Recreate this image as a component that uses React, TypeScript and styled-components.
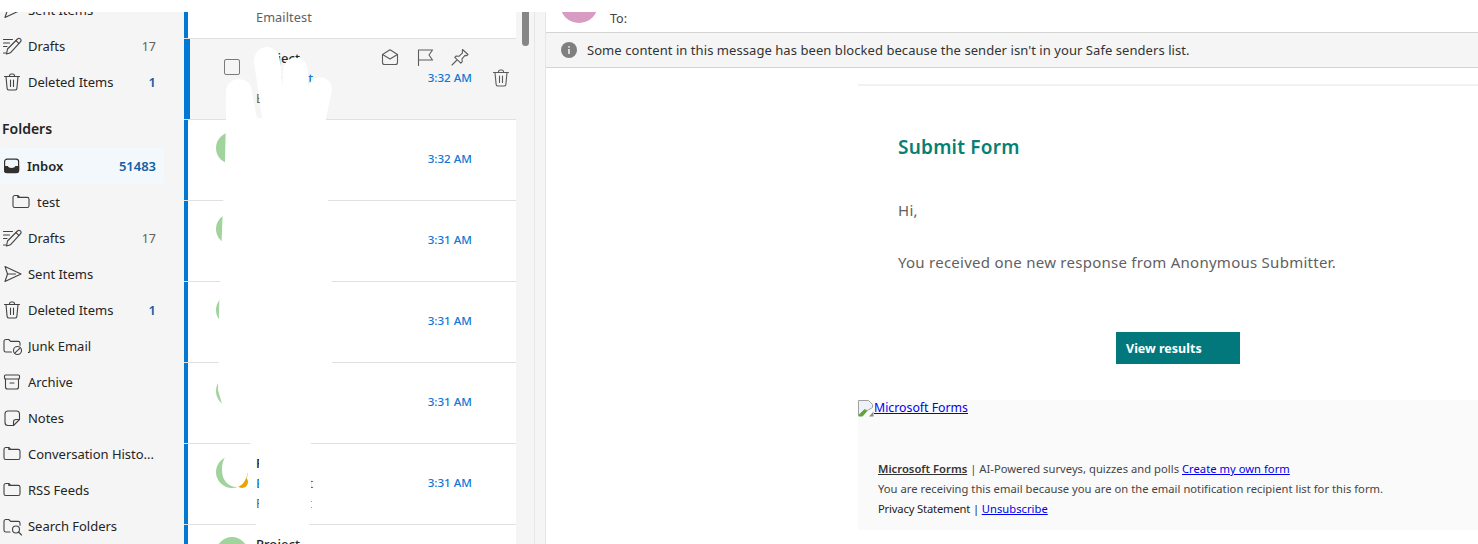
import React from "react";
import styled, { createGlobalStyle } from "styled-components";

const GlobalStyle = createGlobalStyle`
  html, body {
    margin: 0;
    padding: 0;
    background: #ffffff;
  }
  * {
    box-sizing: border-box;
  }
`;

const Page = styled.div`
  position: relative;
  width: 1478px;
  height: 544px;
  overflow: hidden;
  background: #ffffff;
  font-family: "Noto Sans", "Open Sans", sans-serif;
  color: #242424;
`;

const TopStrip = styled.div`
  height: 12px;
  background: #ffffff;
`;

const Workspace = styled.div`
  display: flex;
  height: 532px;
  overflow: hidden;
`;

/* folder pane */
const Sidebar = styled.nav`
  flex: 0 0 184px;
  background: #f5f5f5;
  overflow: hidden;
  padding-right: 20px;
  color: #424242;
`;

const FolderList = styled.div`
  margin-top: -20px;
`;

const FolderRow = styled.div<{ $active?: boolean; $indent?: number }>`
  display: flex;
  align-items: center;
  height: 36px;
  padding-left: ${(p) => 2 + (p.$indent || 0)}px;
  padding-right: 8px;
  border-radius: 4px;
  background: ${(p) => (p.$active ? "#f3f8fd" : "transparent")};
  font-size: 13px;
  letter-spacing: -0.03px;
  font-weight: ${(p) => (p.$active ? 600 : 400)};
`;

const FolderIcon = styled.span<{ $active?: boolean }>`
  flex: 0 0 ${(p) => (p.$active ? 25 : 26)}px;
  display: flex;
  align-items: center;
`;

const FolderName = styled.span`
  flex: 1;
  color: #242424;
  white-space: nowrap;
  overflow: hidden;
  text-overflow: ellipsis;
`;

const FolderCount = styled.span<{ $unread?: boolean }>`
  margin-left: 4px;
  font-size: ${(p) => (p.$unread ? 13 : 12.5)}px;
  color: ${(p) => (p.$unread ? "#115ea3" : "#616161")};
  font-weight: ${(p) => (p.$unread ? 600 : 400)};
`;

const SectionTitle = styled.div`
  display: flex;
  align-items: center;
  height: 36px;
  margin: 10px 0 2px;
  padding-left: 2px;
  font-size: 14px;
  font-weight: 600;
  color: #242424;
`;

/* message list */
const MailList = styled.section`
  flex: 0 0 332px;
  overflow: hidden;
  background: #ffffff;
`;

const MailRows = styled.div`
  margin-top: -54px;
`;

const MailRow = styled.div<{ $hover?: boolean }>`
  display: flex;
  height: 81px;
  padding: 9px 0 0 32px;
  border-bottom: 1px solid #e0e0e0;
  background: ${(p) => (p.$hover ? "#f5f5f5" : "#ffffff")};
  box-shadow: inset ${(p) => (p.$hover ? 6 : 4)}px 0 0 #0078d4;
`;

const LeadSlot = styled.div`
  position: relative;
  flex: 0 0 32px;
  height: 32px;
  margin: 3px 8px 0 0;
  display: flex;
  align-items: center;
  justify-content: center;
`;

const Avatar = styled.div`
  width: 32px;
  height: 32px;
  border-radius: 50%;
  background: #a1d39d;
`;

const PresenceDot = styled.span`
  position: absolute;
  right: 0;
  bottom: 0;
  width: 12px;
  height: 12px;
  border-radius: 50%;
  background: #eaa300;
`;

const CheckBox = styled.span`
  width: 16px;
  height: 16px;
  border: 1px solid #7a7a7a;
  border-radius: 2px;
`;

const MailText = styled.div`
  flex: 1;
  min-width: 0;
`;

const MailLine = styled.div<{ $kind: "from" | "subject" | "preview" }>`
  height: 20px;
  line-height: 20px;
  font-size: ${(p) => (p.$kind === "from" ? 13 : 12.7)}px;
  letter-spacing: 0.1px;
  white-space: nowrap;
  font-weight: ${(p) => (p.$kind === "preview" ? 400 : 500)};
  color: ${(p) =>
    p.$kind === "from" ? "#242424" : p.$kind === "subject" ? "#0f78d4" : "#616161"};
`;

const MailSide = styled.div`
  display: flex;
  flex-direction: column;
  align-items: flex-end;
  margin-right: 44px;
`;

const HoverActions = styled.div`
  display: flex;
  align-items: center;
  gap: 15px;
  height: 20px;
  margin-top: -1px;
  margin-bottom: 1px;
  margin-right: 2px;
  color: #5c5c5c;
`;

const MailTime = styled.div<{ $offset?: boolean }>`
  height: 20px;
  line-height: 20px;
  margin-top: ${(p) => (p.$offset ? 20 : 0)}px;
  font-size: 11.6px;
  font-weight: 500;
  color: #0f78d4;
  white-space: nowrap;
`;

const TrashAction = styled.div`
  position: absolute;
  top: 20px;
  right: 5px;
  display: flex;
  color: #5c5c5c;
`;

const HoverWrap = styled.div`
  position: relative;
`;

/* scrollbar and pane gap */
const ScrollTrack = styled.div`
  flex: 0 0 18px;
  background: #f5f5f5;
  padding-left: 6px;
`;

const ScrollThumb = styled.div`
  width: 7px;
  height: 34px;
  background: #868686;
  border-radius: 0 0 4px 4px;
`;

const PaneGap = styled.div`
  flex: 0 0 12px;
  background: #f5f5f5;
  border-left: 1px solid #e6e6e6;
  border-right: 1px solid #e6e6e6;
`;

/* reading pane */
const Reading = styled.main`
  flex: 1;
  min-width: 0;
  background: #ffffff;
  overflow: hidden;
`;

const HeaderStub = styled.div`
  display: flex;
  height: 20px;
  padding-left: 14px;
`;

const SenderAvatar = styled.div`
  width: 38px;
  height: 38px;
  margin-top: -27px;
  border-radius: 50%;
  background: #d89cc4;
`;

const ToLabel = styled.div`
  margin-left: 12px;
  font-size: 12.5px;
  line-height: 14px;
  color: #424242;
`;

const BlockedBar = styled.div`
  display: flex;
  align-items: center;
  gap: 10px;
  height: 36px;
  padding-left: 15px;
  background: #f5f5f5;
  border-top: 1px solid #d4d4d4;
  border-bottom: 1px solid #d4d4d4;
  font-size: 13px;
  letter-spacing: 0.06px;
  color: #333333;
`;

const InfoDot = styled.svg`
  flex: 0 0 16px;
`;

const EmailBody = styled.div`
  margin: 16px 0 0 312px;
  border-top: 2px solid #f2f2f2;
`;

const FormTitle = styled.h1`
  margin: 46px 0 0 40px;
  height: 30px;
  line-height: 30px;
  font-size: 19px;
  font-weight: 600;
  letter-spacing: 0.22px;
  color: #087f73;
`;

const BodyText = styled.p<{ $gap: number }>`
  margin: ${(p) => p.$gap}px 0 0 40px;
  height: 22px;
  line-height: 22px;
  font-size: 15px;
  letter-spacing: 0.26px;
  color: #616161;
`;

const ButtonRow = styled.div`
  display: flex;
  margin: 59px 0 0 258px;
`;

const ResultsButton = styled.a`
  display: flex;
  align-items: center;
  width: 124px;
  height: 32px;
  padding-left: 10px;
  background: #03787c;
  color: #ffffff;
  font-size: 12.5px;
  font-weight: 700;
`;

const FormFooter = styled.div`
  margin-top: 36px;
  height: 130px;
  background: #fafafa;
`;

const LogoLink = styled.a`
  display: flex;
  align-items: flex-start;
  height: 59px;
  font-size: 12.3px;
  line-height: 16px;
  color: #0000ee;
  text-decoration: underline;
`;

const FooterLines = styled.div`
  padding-left: 20px;
`;

const FooterLine = styled.div`
  height: 20px;
  line-height: 20px;
  font-size: 11.2px;
  letter-spacing: 0.03px;
  color: #444444;
  white-space: nowrap;
`;

const FooterBrand = styled.span`
  color: #333333;
  font-weight: 600;
  text-decoration: underline;
`;

const FooterDark = styled.span`
  color: #222222;
  letter-spacing: -0.15px;
`;

const FooterLink = styled.a`
  color: #0000ee;
  text-decoration: underline;
`;

/* the white scribble painted over the sender names */
const Scribble = styled.svg`
  position: absolute;
  left: 210px;
  top: 40px;
  pointer-events: none;
`;

const Line = styled.svg.attrs({
  fill: "none",
  stroke: "currentColor",
  strokeWidth: 1.1,
  strokeLinecap: "round",
  strokeLinejoin: "round",
  viewBox: "0 0 20 20",
  width: 20,
  height: 20,
})`
  flex: none;
`;

const DraftsIcon = () => (
  <Line>
    <path d="M1.5 3.5h9M1.5 7h6M1.5 10.5h3.5M1.5 17h2.5" />
    <path d="M4.5 18l1-5L15.5 3a2 2 0 0 1 2.9 2.8L8.6 16.7z" />
    <path d="M14 4.6l2.8 2.8" />
  </Line>
);
const TrashIcon = () => (
  <Line>
    <path d="M2.5 4.5h15M7.5 4.5V3.6A1.8 1.8 0 0 1 9.3 2h1.4a1.8 1.8 0 0 1 1.8 1.6v.9" />
    <path d="M4 4.5l1.1 11.8A2 2 0 0 0 7.1 18h5.8a2 2 0 0 0 2-1.7L16 4.5" />
    <path d="M8.5 8v6.5M11.5 8v6.5" />
  </Line>
);
const InboxIcon = () => (
  <svg width={20} height={20} viewBox="0 0 20 20" style={{ flex: "none" }}>
    <rect x="2.6" y="3.1" width="14" height="13.5" rx="2.5" fill="none" stroke="#323130" strokeWidth="1.2" />
    <path d="M2 10h3.8c.4 1.3 1.9 2 3.8 2s3.4-.7 3.8-2h3.8v4.5a2.6 2.6 0 0 1-2.6 2.6H4.6A2.6 2.6 0 0 1 2 14.5z" fill="#323130" />
  </svg>
);
const FolderGlyph = () => (
  <Line>
    <path d="M2 5.3a1.8 1.8 0 0 1 1.8-1.8h3l1.8 1.9h7.6a1.8 1.8 0 0 1 1.8 1.8v6.500a1.8 1.8 0 0 1-1.8 1.8H3.800a1.8 1.8 0 0 1-1.8-1.8z" />
    <path d="M6.800 3.500v1.900h1.800" />
  </Line>
);
const SentIcon = () => (
  <Line>
    <path d="M3 2.5L19 10 3 17.5l2.5-7.5z" />
    <path d="M5.5 10h8" />
  </Line>
);
const JunkIcon = () => (
  <Line>
    <path d="M9.5 16H3.8A1.8 1.8 0 0 1 2 14.200V5.300a1.8 1.8 0 0 1 1.8-1.8h3l1.800 1.900h7.600a1.800 1.800 0 0 1 1.800 1.800v2" />
    <circle cx="15.5" cy="14.5" r="4" />
    <path d="M12.8 17.200l5.400-5.400" />
  </Line>
);
const ArchiveIcon = () => (
  <Line>
    <rect x="2.5" y="3" width="15" height="4" rx="1" />
    <path d="M3.5 7v8a2 2 0 0 0 2 2h9a2 2 0 0 0 2-2V7M8 11h4" />
  </Line>
);
const NotesIcon = () => (
  <Line>
    <path d="M11.5 17.5H6a3 3 0 0 1-3-3V6a3 3 0 0 1 3-3h8.500a3 3 0 0 1 3 3v5.500z" />
    <path d="M11.5 17.5V14a2.500 2.500 0 0 1 2.500-2.500h3.500" />
  </Line>
);
const SearchFolderIcon = () => (
  <Line>
    <path d="M8 16H3.8A1.8 1.8 0 0 1 2 14.200V5.300a1.8 1.8 0 0 1 1.8-1.8h3l1.800 1.900h7.600a1.800 1.800 0 0 1 1.800 1.800v2" />
    <circle cx="14" cy="13.5" r="3.5" />
    <path d="M16.5 16l3 3" />
  </Line>
);
const ReadIcon = () => (
  <Line>
    <path d="M2.5 7.500L10 2.800l7.500 4.700v8a2 2 0 0 1-2 2h-11a2 2 0 0 1-2-2z" />
    <path d="M2.5 7.500L10 12l7.500-4.500" />
  </Line>
);
const FlagIcon = () => (
  <Line>
    <path d="M3.5 18.500V3h14l-3.500 5 3.500 5h-14" />
  </Line>
);
const PinIcon = () => (
  <Line>
    <path d="M12.5 2.500l5.500 5-1.500 1.200-1.500-.3-3 3.500.2 3-1.400 1.300-6-5.800 1.400-1.400 3 .2 3.300-3.400-.2-1.500z" />
    <path d="M6.5 13.500L2 18" />
  </Line>
);
const BrokenImage = () => (
  <svg width={16} height={17} viewBox="0 0 16 17" style={{ flex: "none" }}>
    <path d="M.5.500h10l4 4v3l-5 3-3-1-6 6z" fill="#eef2f8" stroke="#a0a0a0" />
    <path d="M.5 16.500V15l6-5.500 3 1.500-5 5.500z" fill="#5fa53b" />
    <path d="M11 16.500l4.500-5v5z" fill="#8c8c8c" />
  </svg>
);

type Folder = {
  name: string;
  icon: React.ReactNode;
  count?: string;
  unread?: boolean;
  active?: boolean;
  indent?: number;
};

const favourites: Folder[] = [
  { name: "Sent Items", icon: <SentIcon /> },
  { name: "Drafts", icon: <DraftsIcon />, count: "17" },
  { name: "Deleted Items", icon: <TrashIcon />, count: "1", unread: true },
];

const folders: Folder[] = [
  { name: "Inbox", icon: <InboxIcon />, count: "51483", unread: true, active: true },
  { name: "test", icon: <FolderGlyph />, indent: 9 },
  { name: "Drafts", icon: <DraftsIcon />, count: "17" },
  { name: "Sent Items", icon: <SentIcon /> },
  { name: "Deleted Items", icon: <TrashIcon />, count: "1", unread: true },
  { name: "Junk Email", icon: <JunkIcon /> },
  { name: "Archive", icon: <ArchiveIcon /> },
  { name: "Notes", icon: <NotesIcon /> },
  { name: "Conversation Histo...", icon: <FolderGlyph /> },
  { name: "RSS Feeds", icon: <FolderGlyph /> },
  { name: "Search Folders", icon: <SearchFolderIcon /> },
];

const renderFolder = (f: Folder, i: number) => (
  <FolderRow key={f.name + i} $active={f.active} $indent={f.indent}>
    <FolderIcon $active={f.active}>{f.icon}</FolderIcon>
    <FolderName>{f.name}</FolderName>
    {f.count && <FolderCount $unread={f.unread}>{f.count}</FolderCount>}
  </FolderRow>
);

const mails = [
  { time: "3:32 AM" },
  { time: "3:32 AM", hover: true },
  { time: "3:32 AM" },
  { time: "3:31 AM" },
  { time: "3:31 AM" },
  { time: "3:31 AM" },
  { time: "3:31 AM", presence: true },
  { time: "3:31 AM" },
];

export default function App() {
  return (
    <Page>
      <GlobalStyle />
      <TopStrip />
      <Workspace>
        <Sidebar>
          <FolderList>
            {favourites.map(renderFolder)}
            <SectionTitle>Folders</SectionTitle>
            {folders.map(renderFolder)}
          </FolderList>
        </Sidebar>

        <MailList>
          <MailRows>
            {mails.map((m, i) => (
              <MailRow key={i} $hover={m.hover}>
                <LeadSlot>
                  {m.hover ? <CheckBox /> : <Avatar />}
                  {m.presence && <PresenceDot />}
                </LeadSlot>
                <MailText>
                  <MailLine $kind="from">Project</MailLine>
                  <MailLine $kind="subject">Emailtest</MailLine>
                  <MailLine $kind="preview">Emailtest</MailLine>
                </MailText>
                {m.hover ? (
                  <HoverWrap>
                    <MailSide>
                      <HoverActions>
                        <ReadIcon />
                        <FlagIcon />
                        <PinIcon />
                      </HoverActions>
                      <MailTime>{m.time}</MailTime>
                    </MailSide>
                    <TrashAction>
                      <TrashIcon />
                    </TrashAction>
                  </HoverWrap>
                ) : (
                  <MailSide>
                    <MailTime $offset>{m.time}</MailTime>
                  </MailSide>
                )}
              </MailRow>
            ))}
          </MailRows>
        </MailList>

        <ScrollTrack>
          <ScrollThumb />
        </ScrollTrack>
        <PaneGap />

        <Reading>
          <HeaderStub>
            <SenderAvatar />
            <ToLabel>To:</ToLabel>
          </HeaderStub>
          <BlockedBar>
            <InfoDot width={16} height={16} viewBox="0 0 16 16">
              <circle cx="8" cy="8" r="8" fill="#7f7f7f" />
              <rect x="7.3" y="7" width="1.4" height="5" fill="#ffffff" />
              <rect x="7.3" y="4.2" width="1.4" height="1.5" fill="#ffffff" />
            </InfoDot>
            Some content in this message has been blocked because the sender isn't in your Safe senders list.
          </BlockedBar>
          <EmailBody>
            <FormTitle>Submit Form</FormTitle>
            <BodyText $gap={37}>Hi,</BodyText>
            <BodyText $gap={30}>You received one new response from Anonymous Submitter.</BodyText>
            <ButtonRow>
              <ResultsButton>View results</ResultsButton>
            </ButtonRow>
            <FormFooter>
              <LogoLink>
                <BrokenImage />
                Microsoft Forms
              </LogoLink>
              <FooterLines>
                <FooterLine>
                  <FooterBrand>Microsoft Forms</FooterBrand> | AI-Powered surveys, quizzes and polls{" "}
                  <FooterLink>Create my own form</FooterLink>
                </FooterLine>
                <FooterLine>
                  You are receiving this email because you are on the email notification recipient list for this form.
                </FooterLine>
                <FooterLine>
                  <FooterDark>Privacy Statement | </FooterDark>
                  <FooterLink>Unsubscribe</FooterLink>
                </FooterLine>
              </FooterLines>
            </FormFooter>
          </EmailBody>
        </Reading>
      </Workspace>

      <Scribble width={130} height={504} viewBox="210 40 130 504">
        <path
          fill="#ffffff"
          d="M226 92C226 75 252 75 252 92L257 118L262 118L254 62C254 42 280 42 280 62L283 88L283 72C283 53 308 53 308 72L308 90C308 73 332 73 332 90L326 118L328 200L332 281L332 362L320 400L311 443L311 510L309 529L255 529L259 505L259 455L250 443L228 425L218 390L219 310L222 230L225 160L226 119Z"
        />
        <path
          fill="#ffffff"
          d="M222 470C222 462 224 456 232 450L256 450L256 468L248 472C246 480 243 486 237 487C228 487 222 480 222 470Z"
        />
      </Scribble>
    </Page>
  );
}
